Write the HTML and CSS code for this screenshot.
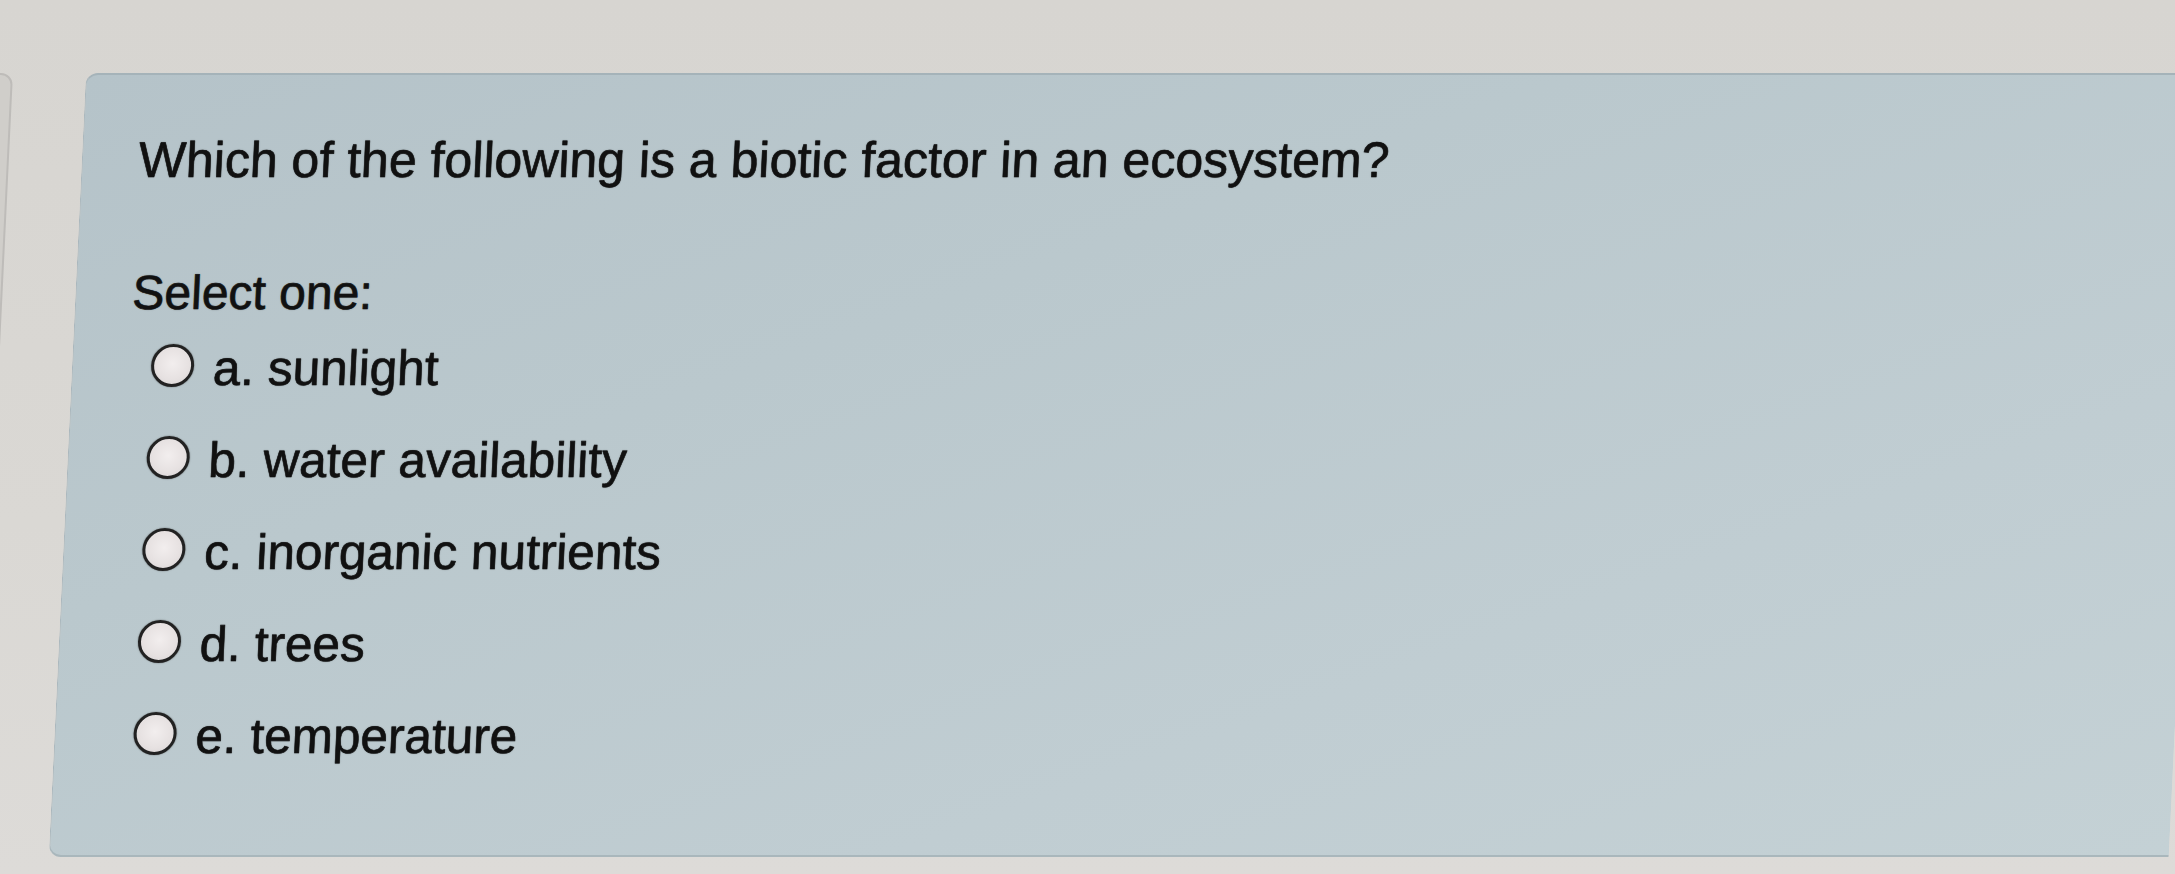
FILE: index.html
```html
<!DOCTYPE html>
<html lang="en">
<head>
<meta charset="utf-8">
<title>Quiz question</title>
<link rel="stylesheet" href="styles.css">
</head>
<body>
<div class="stage">
  <div class="side-strip"></div>
  <div class="panel">
    <p class="question">Which of the following is a biotic factor in an ecosystem?</p>
    <p class="prompt">Select one:</p>
    <div class="options">
      <label class="option"><span class="radio"></span><span class="opt-text">a. sunlight</span></label>
      <label class="option"><span class="radio"></span><span class="opt-text">b. water availability</span></label>
      <label class="option"><span class="radio"></span><span class="opt-text">c. inorganic nutrients</span></label>
      <label class="option"><span class="radio"></span><span class="opt-text">d. trees</span></label>
      <label class="option"><span class="radio"></span><span class="opt-text">e. temperature</span></label>
    </div>
  </div>
</div>
</body>
</html>
```
FILE: styles.css
```css
html, body {
  margin: 0;
  padding: 0;
  width: 2175px;
  height: 874px;
  overflow: hidden;
}
body {
  background: linear-gradient(180deg, #d7d5d1 0%, #dad8d4 60%, #dddbd8 100%);
  font-family: "Liberation Sans", Arial, Helvetica, sans-serif;
  color: #111111;
}
.stage {
  display: flex;
  padding-top: 73px;
  transform-origin: 0 73px;
  transform: skewX(-2.72deg);
}
.side-strip {
  width: 40px;
  margin-left: -27px;
  flex: none;
  background: #d0ceca;
  border: 2px solid #bebcb9;
  border-radius: 0 12px 0 0;
  box-sizing: border-box;
}
.panel {
  margin-left: 73px;
  flex: none;
  width: 2120px;
  box-sizing: border-box;
  padding: 57px 0 92px 56px;
  border-radius: 12px 0 0 12px;
  background: linear-gradient(160deg, #b5c3c9 0%, #bac8cd 35%, #c0cdd2 70%, #c4d1d5 100%);
  border-top: 2px solid #a5b3b9;
  border-left: 1px solid #a9b7bd;
  border-bottom: 2px solid #a9b7bc;
}
.question {
  margin: 0;
  font-size: 50px;
  line-height: 56px;
  -webkit-text-stroke: 0.6px #111111;
  text-shadow: 0 0 1.5px rgba(0, 0, 0, 0.5);
}
.prompt {
  margin: 77px 0 0;
  font-size: 48px;
  line-height: 55px;
  -webkit-text-stroke: 0.6px #111111;
  text-shadow: 0 0 1.5px rgba(0, 0, 0, 0.5);
}
.options {
  margin-top: 20px;
  display: flex;
  flex-direction: column;
  gap: 37px;
}
.option {
  display: flex;
  align-items: center;
  height: 55px;
  font-size: 49.5px;
  line-height: 55px;
  padding-left: 22px;
}
.radio {
  flex: none;
  width: 43px;
  height: 43px;
  box-sizing: border-box;
  border: 3.5px solid #222222;
  border-radius: 50%;
  background: radial-gradient(circle at 50% 45%, #f2eeee 0%, #e6e1e1 60%, #d4d0d1 100%);
  margin-bottom: 4px;
  box-shadow: 0 0 1.5px rgba(0, 0, 0, 0.6);
}
.opt-text {
  margin-left: 19px;
  -webkit-text-stroke: 0.6px #111111;
  text-shadow: 0 0 1.5px rgba(0, 0, 0, 0.5);
}
```
